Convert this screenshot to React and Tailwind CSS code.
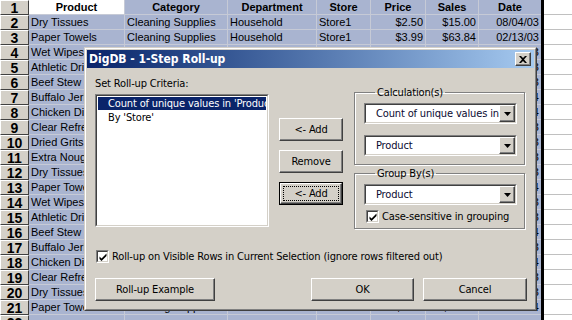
import React from "react";

const years = ["03", "03", "03", "03", "03", "04", "04", "03", "03", "03", "03", "04", "03", "03", "04", "03", "04", "03", "03", "04"];

const products = [
  "Dry Tissues", "Paper Towels", "Wet Wipes", "Athletic Drink", "Beef Stew",
  "Buffalo Jerky", "Chicken Dinner", "Clear Refresher", "Dried Grits", "Extra Nougat",
  "Dry Tissues", "Paper Towels", "Wet Wipes", "Athletic Drink", "Beef Stew",
  "Buffalo Jerky", "Chicken Dinner", "Clear Refresher", "Dry Tissues", "Paper Towels",
];

const rows = products.map((p, i) => {
  if (i === 0) return [p, "Cleaning Supplies", "Household", "Store1", "$2.50", "$15.00", "08/04/03"];
  if (i === 1) return [p, "Cleaning Supplies", "Household", "Store1", "$3.99", "$63.84", "02/13/03"];
  return [p, "Cleaning Supplies", "Household", "Store2", "$3.99", "$47.88", "05/1" + (i % 9) + "/" + years[i]];
});

const cols = [
  { name: "Product", w: "w-[96px]", align: "text-left" },
  { name: "Category", w: "w-[103px]", align: "text-left" },
  { name: "Department", w: "w-[89px]", align: "text-left" },
  { name: "Store", w: "w-[54px]", align: "text-left" },
  { name: "Price", w: "w-[55px]", align: "text-right" },
  { name: "Sales", w: "w-[53px]", align: "text-right" },
  { name: "Date", w: "w-[62px]", align: "text-right" },
];

function RowHeader({ n }) {
  return (
    <div className="w-[29px] h-[15px] shrink-0 bg-[#d4d0c8] border-t border-l border-t-white border-l-white border-r border-b border-r-[#404040] border-b-[#404040] flex items-center justify-center text-[14px] font-bold leading-none text-black">
      {n}
    </div>
  );
}

function SheetRow({ n, cells, header }) {
  return (
    <div className="flex h-[15px]">
      <RowHeader n={n} />
      {cols.map((c, i) => (
        <div
          key={c.name}
          className={`${c.w} h-[15px] shrink-0 overflow-hidden whitespace-nowrap border-b border-[#c6cad6] ${i < 6 ? "border-r" : ""} ${
            header ? "text-center font-bold" : c.align
          } ${header && i === 0 ? "bg-white" : "bg-[#a9b4d0]"} px-[2px] text-[11px] leading-[14px] text-black`}
        >
          {cells ? cells[i] : ""}
        </div>
      ))}
      <div className="w-[3px] h-[15px] shrink-0 bg-black" />
      <div className="flex-1 h-[15px] bg-white border-b border-[#c0c0c0]" />
    </div>
  );
}

const raised =
  "bg-[#d4d0c8] border border-t-white border-l-white border-r-[#404040] border-b-[#404040] shadow-[inset_-1px_-1px_0_#808080]";

function Button({ children, className }) {
  return (
    <div className={`${raised} ${className} h-[23px] flex items-center justify-center text-black`}>
      {children}
    </div>
  );
}

function FocusButton({ children, className }) {
  return (
    <div className={`${className} h-[23px] border border-black`}>
      <div className={`${raised} h-full p-[2px]`}>
        <div className="h-full border border-dotted border-black flex items-center justify-center text-black">
          {children}
        </div>
      </div>
    </div>
  );
}

function Sunken({ className, children }) {
  return (
    <div className={`border border-t-[#808080] border-l-[#808080] border-r-white border-b-white ${className}`}>
      <div className="h-full border border-t-[#404040] border-l-[#404040] border-r-[#d4d0c8] border-b-[#d4d0c8] bg-white">
        {children}
      </div>
    </div>
  );
}

function Check() {
  return (
    <Sunken className="w-[13px] h-[13px] shrink-0">
      <svg width="11" height="11" viewBox="0 0 11 11" className="block">
        <path d="M1.5 4.5 L3.5 6.5 L8.5 1.5 L8.5 4 L3.5 9 L1.5 7 Z" fill="black" />
      </svg>
    </Sunken>
  );
}

function Select({ value, className }) {
  return (
    <Sunken className={`h-[21px] ${className}`}>
      <div className="flex h-full items-center">
        <div className="flex-1 overflow-hidden whitespace-nowrap pl-[10px] text-[#0a0a30]">{value}</div>
        <div className={`${raised} w-[16px] h-[17px] flex items-center justify-center`}>
          <svg width="7" height="4" viewBox="0 0 7 4">
            <path d="M0 0 H7 L3.5 4 Z" fill="black" />
          </svg>
        </div>
      </div>
    </Sunken>
  );
}

function Group({ label, className, children }) {
  return (
    <fieldset className={`border border-[#808080] shadow-[inset_1px_1px_0_white,1px_1px_0_white] ${className}`}>
      <legend className="ml-[11px] px-[2px] leading-[13px]">{label}</legend>
      {children}
    </fieldset>
  );
}

function Dialog() {
  return (
    <div className="absolute left-[84px] top-[47px] w-[453px] h-[264px] border border-t-[#d4d0c8] border-l-[#d4d0c8] border-r-[#404040] border-b-[#404040] bg-[#d4d0c8] font-['DejaVu_Sans_Condensed','DejaVu_Sans',sans-serif] font-stretch-condensed text-[11px] leading-[13px] tracking-[-0.15px] text-black">
      <div className="h-full border border-t-white border-l-white border-r-[#808080] border-b-[#808080] p-px">
        <div className="h-[18px] flex items-center pl-[2px] pr-[3px] bg-linear-to-r from-[#0a246a] to-[#a6caf0]">
          <span className="flex-1 font-bold text-white text-[12px] tracking-normal">DigDB - 1-Step Roll-up</span>
          <div className={`${raised} w-[16px] h-[14px] flex items-center justify-center`}>
            <svg width="8" height="7" viewBox="0 0 8 7">
              <path d="M0 0 H2 L4 2 L6 0 H8 L5 3.5 L8 7 H6 L4 5 L2 7 H0 L3 3.5 Z" fill="black" />
            </svg>
          </div>
        </div>

        <div className="pl-[8px] pr-[7px]">
          <div className="flex items-start mt-[9px]">
            <div className="w-[174px]">
              <div className="mb-[4px]">Set Roll-up Criteria:</div>
              <Sunken className="h-[133px]">
                <div className="p-px">
                  <div className="bg-[#0a246a] text-white pl-[10px] h-[13px] whitespace-nowrap overflow-hidden">
                    Count of unique values in 'Product'
                  </div>
                  <div className="pl-[10px] h-[13px] mt-px">By 'Store'</div>
                </div>
              </Sunken>
            </div>

            <div className="ml-[10px] mt-[41px] w-[64px] flex flex-col gap-[9px]">
              <Button className="w-[64px]">&lt;- Add</Button>
              <Button className="w-[64px]">Remove</Button>
              <FocusButton className="w-[64px]">&lt;- Add</FocusButton>
            </div>

            <div className="ml-[11px] mt-[9px] w-[171px]">
              <Group label="Calculation(s)" className="h-[79px] pl-[9px] pr-[7px]">
                <Select value="Count of unique values in" className="mt-[4px]" />
                <Select value="Product" className="mt-[11px]" />
              </Group>
              <Group label="Group By(s)" className="h-[62px] mt-[2px] pl-[9px] pr-[7px]">
                <Select value="Product" className="mt-[4px]" />
                <div className="flex items-center mt-[5px] ml-[2px] gap-[3px]">
                  <Check />
                  <span>Case-sensitive in grouping</span>
                </div>
              </Group>
            </div>
          </div>

          <div className="flex items-center mt-[21px] ml-px gap-[3px]">
            <Check />
            <span>Roll-up on Visible Rows in Current Selection (ignore rows filtered out)</span>
          </div>

          <div className="flex mt-[15px]">
            <Button className="w-[120px]">Roll-up Example</Button>
            <Button className="w-[103px] ml-auto">OK</Button>
            <Button className="w-[104px] ml-[9px]">Cancel</Button>
          </div>
        </div>
      </div>
    </div>
  );
}

export default function App() {
  return (
    <div className="relative w-[572px] h-[320px] overflow-hidden bg-white font-['Liberation_Sans',Arial,sans-serif]">
      <div className="flex flex-col">
        <SheetRow n={1} cells={cols.map((c) => c.name)} header />
        {rows.map((r, i) => (
          <SheetRow key={i} n={i + 2} cells={r} />
        ))}
        <SheetRow n={22} />
      </div>
      <Dialog />
    </div>
  );
}
